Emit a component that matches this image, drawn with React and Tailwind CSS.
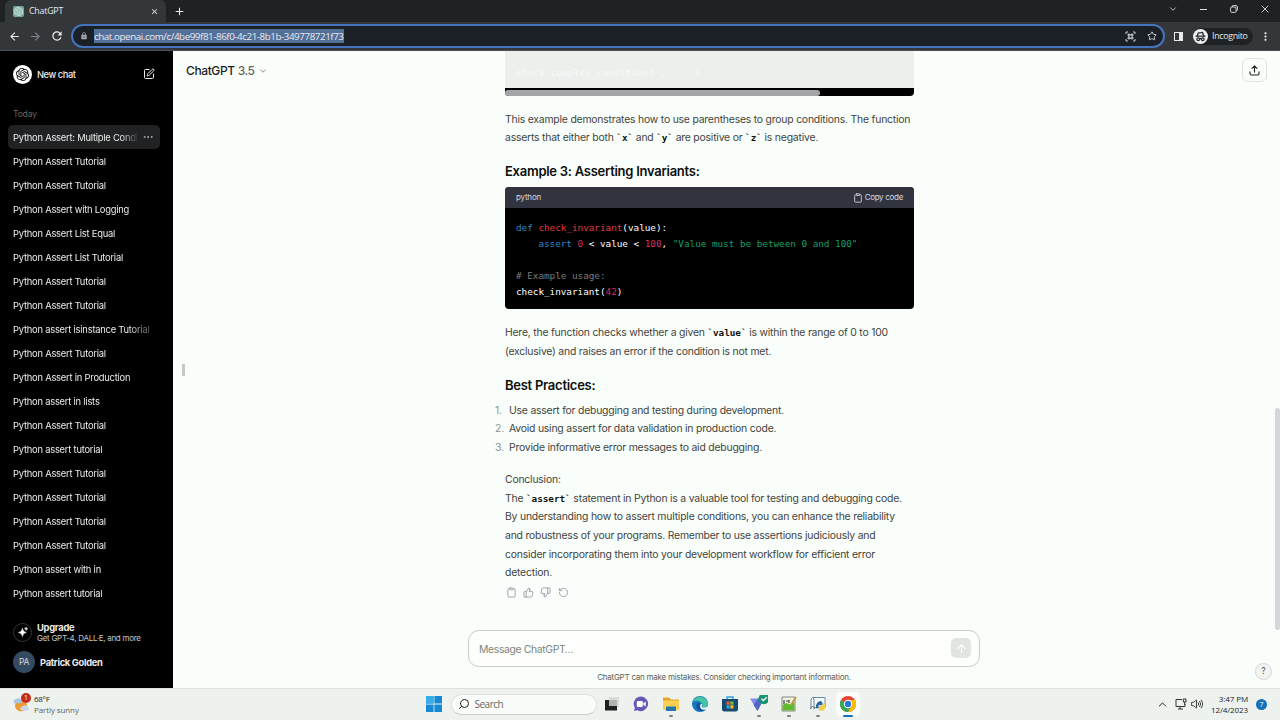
import { ArrowUp, ChevronDown, ChevronUp, Clipboard, Ellipsis, HatGlasses, RotateCcw, Search, SquarePen, Star, ThumbsDown, ThumbsUp } from 'lucide-react';
import { MdArrowBack, MdArrowForward, MdClose, MdLock, MdMoreVert, MdRefresh, MdAdd } from 'react-icons/md';
import { SiOpenai } from 'react-icons/si';

const chats = [
  'Python Assert Tutorial',
  'Python Assert Tutorial',
  'Python Assert with Logging',
  'Python Assert List Equal',
  'Python Assert List Tutorial',
  'Python Assert Tutorial',
  'Python Assert Tutorial',
  'Python assert isinstance Tutorial',
  'Python Assert Tutorial',
  'Python Assert in Production',
  'Python assert in lists',
  'Python Assert Tutorial',
  'Python assert tutorial',
  'Python Assert Tutorial',
  'Python Assert Tutorial',
  'Python Assert Tutorial',
  'Python Assert Tutorial',
  'Python assert with in',
  'Python assert tutorial',
];

const practices = [
  'Use assert for debugging and testing during development.',
  'Avoid using assert for data validation in production code.',
  'Provide informative error messages to aid debugging.',
];

function BrowserChrome() {
  return (
    <header className="h-[51px] shrink-0 bg-[#1e2224] text-[#e8eaed] font-['Open_Sans',sans-serif]">
      <div className="h-[22px] flex items-center">
        <div className="ml-[5px] w-[161px] h-[22px] rounded-t-md bg-[#343739] flex items-center pl-2 pr-[7px]">
          <span className="w-[11px] h-[11px] rounded-[2px] bg-[#74aa9c] flex items-center justify-center">
            <SiOpenai size={9} color="#e4f4ee" />
          </span>
          <span className="ml-[5px] pt-px text-[8.8px] tracking-[-0.2px]">ChatGPT</span>
          <MdClose size={9} className="ml-auto" />
        </div>
        <MdAdd size={13} className="ml-[7px]" />
        <div className="ml-auto flex items-center pr-[11px] pb-1">
          <ChevronDown size={10} strokeWidth={1.8} className="mr-[22px]" />
          <span className="w-[7px] h-px bg-[#dfe1e3] mr-[23px]" />
          <svg width="8" height="8" viewBox="0 0 8 8" fill="none" stroke="#dfe1e3" strokeWidth="0.9" className="mr-[23px]">
            <rect x="0.6" y="2" width="5.4" height="5.4" rx="1" />
            <path d="M2.2 2V1.2Q2.2.6 3 .6H6Q7.4.6 7.4 2V5Q7.4 5.8 6.3 5.8" />
          </svg>
          <svg width="8" height="8" viewBox="0 0 8 8" stroke="#dfe1e3" strokeWidth="0.9">
            <path d="M.7.7l6.6 6.6M7.3.7L.7 7.3" />
          </svg>
        </div>
      </div>
      <div className="h-[29px] bg-[#343739] border-b border-[#4b4e58] flex items-center pl-2">
        <MdArrowBack size={13} />
        <MdArrowForward size={13} className="ml-2 text-[#82868a]" />
        <MdRefresh size={14} className="ml-[8px]" />
        <div className="ml-[7px] w-[1094px] h-6 rounded-full border-2 border-[#4573bd] bg-[#1b2027] flex items-center pl-[7px] pr-[6px]">
          <MdLock size={8} className="text-[#a9adb2]" />
          <span className="ml-[6px] pt-px bg-[#53709b] text-[9.8px] leading-[13px] h-[14px] whitespace-nowrap tracking-[-0.43px]">
            chat.openai.com/c/4be99f81-86f0-4c21-8b1b-349778721f73
          </span>
          <svg width="11" height="11" viewBox="0 0 11 11" fill="none" stroke="#c9ccd0" className="ml-auto">
            <path d="M1 3V1h2M8 1h2v2M10 8v2H8M3 10H1V8" />
            <path d="M3.9 2.4v6.2M7.1 2.4v6.2M2.4 3.9h6.2M2.4 7.1h6.2" strokeWidth="1.2" />
          </svg>
          <Star size={10} className="ml-[11px]" />
        </div>
        <div className="ml-[9px] w-[9px] h-[9px] border border-[#e8eaed] border-r-4" />
        <div className="ml-[10px] w-[60px] h-[17px] rounded-full bg-[#1e2224] flex items-center">
          <span className="w-[15px] h-[15px] rounded-full bg-[#edeff1] flex items-center justify-center">
            <HatGlasses size={11} color="#25282b" strokeWidth={2.8} />
          </span>
          <span className="ml-[4px] pt-px text-[8.8px] tracking-[-0.3px]">Incognito</span>
        </div>
        <MdMoreVert size={13} className="ml-[6px]" />
      </div>
    </header>
  );
}

function Sidebar() {
  return (
    <aside className="w-[173px] shrink-0 bg-black text-[#ececec] flex flex-col text-[9.33px] tracking-[-0.21px]">
      <div className="h-[46px] flex items-center pl-[13px] pr-[18px]">
        <span className="w-[19px] h-[19px] rounded-full bg-white flex items-center justify-center">
          <SiOpenai size={13} color="#000" />
        </span>
        <span className="ml-[5px] pt-[2px] font-medium tracking-[-0.45px]">New chat</span>
        <SquarePen size={12} strokeWidth={2} className="ml-auto" />
      </div>
      <div className="h-[28px] pl-[13px] pt-[11px] leading-3 text-[#666] text-[8.6px]">Today</div>
      <div className="ml-2 w-[152px] h-6 rounded-[5px] bg-[#202223] flex items-center pl-[5px] pr-[6px]">
        <span className="w-[124px] pt-[2px] whitespace-nowrap [mask-image:linear-gradient(90deg,#000_108px,transparent_126px)]">
          Python Assert: Multiple Condi
        </span>
        <Ellipsis size={12} strokeWidth={1.8} className="ml-auto shrink-0 text-[#b5b5b5]" />
      </div>
      {chats.map((title, i) => (
        <div key={i} className="h-6 ml-[13px] w-[148px] leading-[26px] whitespace-nowrap [mask-image:linear-gradient(90deg,#000_114px,transparent_148px)]">
          {title}
        </div>
      ))}
      <div className="mt-[15px] h-6 flex items-center pl-[13px]">
        <span className="w-[19px] h-[19px] rounded-full border border-[#363636] flex items-center justify-center">
          <svg width="10" height="10" viewBox="0 0 9 9" fill="#fff">
            <path d="M4 1Q4.4 4.4 7.5 5Q4.4 5.5 4 8.7Q3.6 5.5.4 5Q3.6 4.4 4 1ZM7.3 0Q7.5 1.4 8.8 1.6Q7.5 1.8 7.3 3.2Q7.1 1.8 5.8 1.6Q7.1 1.4 7.3 0Z" stroke="#fff" strokeWidth="0.4" />
          </svg>
        </span>
        <div className="ml-[5px] pt-[2px] leading-[11px]">
          <div className="font-bold tracking-[-0.25px]">Upgrade</div>
          <div className="text-[8px] text-[#c6c6c6] tracking-[-0.28px]">Get GPT-4, DALL·E, and more</div>
        </div>
      </div>
      <div className="mt-[7px] h-[22px] flex items-center pl-[13px]">
        <span className="w-[22px] h-[22px] rounded-full bg-[#344a60] text-[8.5px] text-[#cdd6de] flex items-center justify-center">PA</span>
        <span className="ml-[5px] pt-[2px] font-bold tracking-[-0.3px]">Patrick Golden</span>
      </div>
    </aside>
  );
}

function Code({ children }) {
  return <code className="font-['DejaVu_Sans_Mono',monospace] font-bold text-[9.33px] leading-[0] tracking-[-0.04px] text-[#111]">`{children}`</code>;
}

function CodeBlock() {
  return (
    <div className="mt-[6px] h-[122px] rounded-[4px] overflow-hidden bg-black">
      <div className="h-[21px] bg-[#31343e] flex items-center pl-[11px] pr-[11px] text-[8px] text-[#d9d9e3]">
        python
        <Clipboard size={10} className="ml-auto mr-[2px]" />
        <span className="tracking-[-0.3px]">Copy code</span>
      </div>
      <pre className="pl-[11px] pt-[12px] font-['DejaVu_Sans_Mono',monospace] text-[9.33px] tracking-[-0.02px] leading-4 text-white">
        <span className="text-[#2e84c8]">def</span> <span className="text-[#e03a3f]">check_invariant</span>(value):{'\n'}
        {'    '}<span className="text-[#2e84c8]">assert</span> <span className="text-[#d3305f]">0</span> &lt; value &lt; <span className="text-[#d3305f]">100</span>, <span className="text-[#149f68]">"Value must be between 0 and 100"</span>{'\n'}
        {'\n'}
        <span className="text-[#7c7c7c]"># Example usage:</span>{'\n'}
        check_invariant(<span className="text-[#d3305f]">42</span>)
      </pre>
    </div>
  );
}

function Answer() {
  return (
    <div className="w-[409px] ml-[332px] text-[10.4px] leading-[18.67px] text-[#3f4440] tracking-[-0.205px] whitespace-nowrap">
      <div className="h-[45px] rounded-b-[4px] overflow-hidden bg-black flex flex-col">
        <pre className="h-[37px] bg-[#ecefeb] pl-[11px] pt-[14px] font-['DejaVu_Sans_Mono',monospace] text-[9.33px] leading-4 tracking-[0.15px] text-[#f8faf8]">
          check_complex_condition( ,  ,  )
        </pre>
        <div className="mt-[2px] w-[315px] h-[6px] rounded-[3px] bg-[#a3a6a9]" />
      </div>
      <p className="mt-[14.67px]">
        This example demonstrates how to use parentheses to group conditions. The function<br />
        asserts that either both <Code>x</Code> and <Code>y</Code> are positive or <Code>z</Code> is negative.
      </p>
      <h3 className="mt-[13px] h-[20px] leading-[20px] text-[13px] font-semibold text-[#0d0f0d] tracking-[-0.26px]">Example 3: Asserting Invariants:</h3>
      <CodeBlock />
      <p className="mt-[15px]">
        Here, the function checks whether a given <Code>value</Code> is within the range of 0 to 100<br />
        (exclusive) and raises an error if the condition is not met.
      </p>
      <h3 className="mt-[13.2px] h-[20px] leading-[20px] text-[13px] font-semibold text-[#0d0f0d] tracking-[-0.26px]">Best Practices:</h3>
      <ol className="mt-[7px]">
        {practices.map((item, i) => (
          <li key={item} className="flex">
            <span className="-ml-[10px] w-[14px] text-[#8c918d]">{i + 1}.</span>
            {item}
          </li>
        ))}
      </ol>
      <p className="mt-[13.3px]">
        Conclusion:<br />
        The <Code>assert</Code> statement in Python is a valuable tool for testing and debugging code.<br />
        By understanding how to assert multiple conditions, you can enhance the reliability<br />
        and robustness of your programs. Remember to use assertions judiciously and<br />
        consider incorporating them into your development workflow for efficient error<br />
        detection.
      </p>
      <div className="mt-[4.500px] ml-px flex gap-[6.2px] text-[#9a9ca8]">
        <Clipboard size={11} />
        <ThumbsUp size={11} />
        <ThumbsDown size={11} />
        <RotateCcw size={11} />
      </div>
    </div>
  );
}

function Chat() {
  return (
    <main className="relative flex-1 bg-[#fafefa] overflow-hidden flex flex-col">
      <Answer />
      <div className="mt-auto ml-[295px] w-[512px] h-[37px] shrink-0 rounded-[11px] border border-[#c9cec9] bg-[#fcfffc] flex items-center pl-[10px] pr-[8px]">
        <span className="pt-[2px] text-[10.4px] text-[#80857f] tracking-[-0.35px]">Message ChatGPT…</span>
        <span className="ml-auto mb-px w-5 h-5 rounded-[5px] bg-[#e1e4e1] flex items-center justify-center">
          <ArrowUp size={13} color="#fff" />
        </span>
      </div>
      <p className="ml-[295px] w-[512px] mt-[4px] mb-[5px] h-3 leading-3 text-center text-[8px] tracking-[-0.24px] text-[#5c615c]">
        ChatGPT can make mistakes. Consider checking important information.
      </p>

      {/* floating header, drag handle, help button and scrollbar */}
      <div className="absolute left-[13px] top-[12px] h-4 flex items-center text-[12px] font-medium text-[#1d1f1d] tracking-[-0.4px]">
        ChatGPT<span className="ml-[3px] text-[#656865]">3.5</span>
        <ChevronDown size={10} className="ml-[3px] text-[#777]" />
      </div>
      <button className="absolute right-[13px] top-[7px] w-[25px] h-[24px] rounded-[6px] border border-[#dfe3df] flex items-center justify-center">
        <svg width="11" height="11" viewBox="0 0 11 11" fill="none" stroke="#222" strokeWidth="1.1" strokeLinecap="round" strokeLinejoin="round">
          <path d="M5.5 7V1M3 3.3L5.5.9 8 3.3M1 6.8v1.7Q1 10 2.5 10h6Q10 10 10 8.5V6.8" />
        </svg>
      </button>
      <span className="absolute left-[9px] top-[313px] w-[3px] h-[12px] bg-[#c5c9c5]" />
      <span className="absolute right-[8px] bottom-[8px] w-[17px] h-[17px] rounded-full border border-[#d4d8d4] bg-[#f1f4f1] text-[8.5px] text-[#555] flex items-center justify-center">?</span>
      <span className="absolute right-0 top-[357px] w-[5px] h-[222px] rounded-full bg-[#d5d7db]" />
    </main>
  );
}

function AppIcon({ children, open, active }) {
  return (
    <div className={active ? 'relative w-6 h-6 rounded-[4px] bg-[#fbfdfb] flex items-center justify-center' : 'relative w-6 h-6 flex items-center justify-center'}>
      <svg width="18" height="18" viewBox="0 0 18 18" fill="none">{children}</svg>
      {open && <span className="absolute bottom-[-1px] w-1 h-[2px] rounded-full bg-[#7d807d]" />}
      {active && <span className="absolute bottom-[-1px] w-[10px] h-[2px] rounded-full bg-[#1673b8]" />}
    </div>
  );
}

function Taskbar() {
  return (
    <footer className="h-8 shrink-0 bg-[#eef2ee] border-t border-[#dde1dd] pb-px flex items-center font-['Open_Sans',sans-serif] text-[#222]">
      <div className="w-[421.5px] shrink-0 flex items-center pl-[13px]">
        <span className="relative">
          <svg width="18" height="18" viewBox="0 0 18 18">
            <circle cx="8" cy="10.5" r="6" fill="#ef9a34" />
            <path d="M1 8.2a2.5 2.5 0 012-4 3 3 0 015 .8 2 2 0 010 3.2z" fill="#a9c7e4" />
            <path d="M9 15.500a2 2 0 01.7-4 3 3 0 015.2.6 1.8 1.8 0 01-.2 3.400z" fill="#c4d8eb" />
          </svg>
          <span className="absolute left-[8px] -top-[2px] w-[10px] h-[10px] rounded-full bg-[#c42b1c] text-white text-[7px] leading-[10px] text-center">1</span>
        </span>
        <div className="ml-[3px] text-[8px] leading-[11px] tracking-[-0.1px]">
          <div className="tracking-[-0.3px]">68°F</div>
          <div className="text-[#626562]">Partly sunny</div>
        </div>
      </div>
      <AppIcon>
        <path d="M1 1h7.6v7.6H1zM9.4 1H17v7.6H9.4zM1 9.4h7.6V17H1zM9.4 9.4H17V17H9.4z" fill="#148bd4" />
        <path d="M1 1h7.6v7.6H1z" fill="#35aee9" />
      </AppIcon>
      <div className="ml-[5px] w-[146px] h-[21px] rounded-full border border-[#dfe3df] border-b-[#c9cdc9] bg-[#f9fcf9] flex items-center pl-[6px] text-[10px] text-[#636663]">
        <Search size={12} color="#222" className="-scale-x-100" />
        <span className="ml-[5px] tracking-[-0.5px]">Search</span>
      </div>
      <div className="ml-[3px] flex gap-[5.5px]">
        <AppIcon>
          <path d="M6 2h10v10H6z" fill="#d9dcd9" />
          <path d="M2 5h4v6h8v4.5H2z" fill="#1f2120" />
          <path d="M6 5h8v6H6z" fill="#b0b3b0" />
        </AppIcon>
        <AppIcon>
          <path d="M9 1.5a7.3 7.3 0 11-3.5 13.8L2 16l.8-3.4A7.3 7.3 0 019 1.5z" fill="#6658b5" />
          <rect x="4.8" y="6" width="6" height="6" rx="1.2" fill="#fff" />
          <path d="M11.3 8.3l2.4-1.8v5l-2.4-1.8z" fill="#fff" />
        </AppIcon>
        <AppIcon open>
          <path d="M1 2.5h6l2 2h8V15H1z" fill="#e3a72a" />
          <path d="M1 5.5h16V15H1z" fill="#fbcf53" />
          <path d="M4 11.5h10V16H4z" fill="#2276ad" />
        </AppIcon>
        <AppIcon>
          <circle cx="9" cy="9" r="8" fill="#1579c4" />
          <path d="M1.5 7A8 8 0 0117 9c0 2.700-2.500 4-5 3.200C11 11.8 11.6 11 11.3 9.5 10.5 6 5 4.5 1.5 7z" fill="#45c5a0" />
          <path d="M6 8.5c-2 3 .5 7.5 4.5 7.5 2.400 0 4-.8 5-2-4 1.400-6.500-1-6-3.500.2-1.300-1.500-3.500-3.500-2z" fill="#12529c" />
          <path d="M9.2 10c.5-1.600 2-1.300 2-.3s-1 1.400 0 2.300c1 .8 3.500.9 5.800-.5l.5 2-3 1.200c-1.300.2-2.100 0-3-.2-1.800-.5-2.700-2-2.300-4.500z" fill="#eef2ee" />
        </AppIcon>
        <AppIcon>
          <path d="M6 4V2h6v2" stroke="#2aa6da" strokeWidth="1.4" />
          <path d="M1 4h16v10a2.5 2.5 0 01-2.5 2.5h-11A2.5 2.5 0 011 14z" fill="#174a73" />
          <path d="M5.5 6.5h3.2v3.2H5.5z" fill="#f05a35" />
          <path d="M9.3 6.5h3.2v3.2H9.3z" fill="#82bb2d" />
          <path d="M5.5 10.3h3.2v3.2H5.5z" fill="#27a8e4" />
          <path d="M9.3 10.3h3.2v3.2H9.3z" fill="#f5b92f" />
        </AppIcon>
        <AppIcon open>
          <path d="M0 3.5h14L7.5 16z" fill="#7f8fe8" />
          <path d="M3.5 10L8 3.5h6L7.5 16z" fill="#5566c7" />
          <circle cx="14" cy="3.7" r="5.5" fill="#169572" />
          <path d="M11.5 3.7l1.9 1.900L16.700 2.200" stroke="#fff" strokeWidth="1.3" />
        </AppIcon>
        <AppIcon open>
          <path d="M2 2h13v14H2z" fill="#f0f1dc" stroke="#85898a" />
          <path d="M2.5 10l4-2 4 1.5 4-2v8h-12z" fill="#64b934" />
          <path d="M4 5v4M6 6h3M9 5v3" stroke="#434743" strokeWidth="1.2" />
          <path d="M16 2l-5 8" stroke="#c29438" strokeWidth="1.8" />
        </AppIcon>
        <AppIcon open>
          <path d="M4 2.5h12v10H4z" fill="#f3f8fb" stroke="#658da5" />
          <path d="M2 14V5q1.5-5 3 0v9M1 14l2.5-3L6 14" fill="#fff" stroke="#637c8c" />
          <path d="M8.5 7.5q3-3 5 0v2.8h-4v3H7V10z" fill="#27689e" />
          <path d="M10 11h3.5V8.5h2.5v4.2q0 3-3 3h-3z" fill="#f5d044" />
        </AppIcon>
        <AppIcon active>
          <circle cx="9" cy="9" r="8" fill="#e94335" />
          <path d="M9 9L2.07 5A8 8 0 009 17l3.5-6z" fill="#34a853" />
          <path d="M9 17a8 8 0 006.93-12H9l3.5 6z" fill="#fbbc05" />
          <circle cx="9" cy="9" r="4.2" fill="#fff" />
          <circle cx="9" cy="9" r="3.2" fill="#2679da" />
        </AppIcon>
      </div>
      <div className="ml-auto flex items-center pr-[13px]">
        <ChevronUp size={13} strokeWidth={1.8} />
        <svg width="12" height="12" viewBox="0 0 12 12" fill="none" stroke="#303330" className="ml-[6px]">
          <path d="M7 1.5H1v7h9V6M3 11h5M5 8.5V11" />
          <path d="M8.3 1h2.7v3H8.3zM9.7 4v3" />
        </svg>
        <svg width="12" height="12" viewBox="0 0 12 12" fill="none" stroke="#303330" strokeWidth="0.9" className="ml-[4px]">
          <path d="M.6 4.3h2L5.5 2v8L2.6 7.7h-2zM7 4.3q1.3 1.7 0 3.4M8.5 3q2.3 3 0 6M10 1.8q3.2 4.2 0 8.4" />
        </svg>
        <div className="ml-[8px] w-[37px] text-right text-[8px] leading-[11px] tracking-[-0.1px]">
          <div>3:47 PM</div>
          <div>12/4/2023</div>
        </div>
        <span className="ml-[8px] w-[11px] h-[11px] rounded-full bg-[#1271b9] text-white text-[7px] leading-[11px] text-center">7</span>
      </div>
    </footer>
  );
}

export default function App() {
  return (
    <div className="w-[1280px] h-[720px] overflow-hidden flex flex-col font-['Inter',sans-serif]">
      <BrowserChrome />
      <div className="flex-1 min-h-0 flex">
        <Sidebar />
        <Chat />
      </div>
      <Taskbar />
    </div>
  );
}
